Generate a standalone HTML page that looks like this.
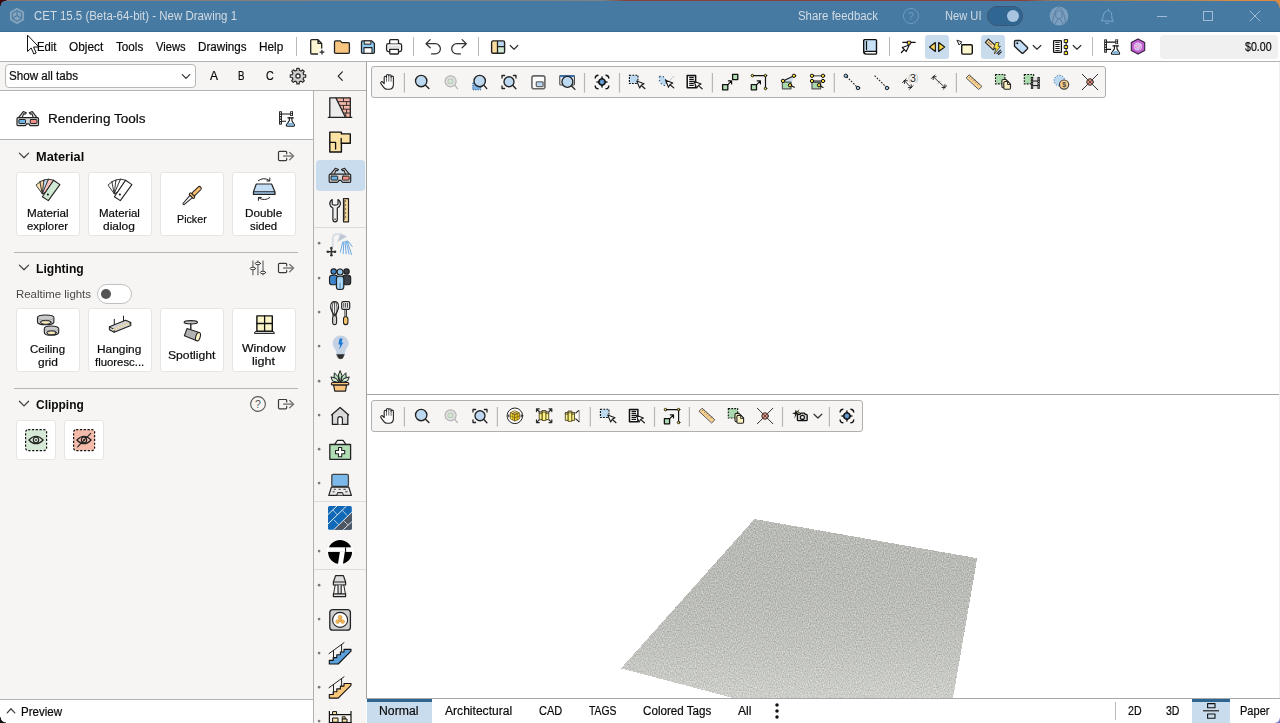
<!DOCTYPE html>
<html><head><meta charset="utf-8">
<style>
*{box-sizing:border-box;margin:0;padding:0}
html,body{width:1280px;height:723px;overflow:hidden;background:#fff;font-family:"Liberation Sans",sans-serif;color:#1a1a1a;font-size:12px}
div,svg{position:absolute}
.tx{white-space:nowrap;line-height:normal;transform-origin:0 0;-webkit-text-stroke:0.2px currentColor}
.ns{-webkit-text-stroke:0}
.ct{text-align:center;font-size:12px;color:#1a1a1a}
#title{left:0;top:0;width:1280px;height:32px;background:#467aa2;border-bottom:1px solid #396d9a}
#topedge{left:0;top:0;width:1280px;height:1px;background:linear-gradient(90deg,#300 0%,#400 0.3%,#8a7d76 0.6%,#7a848a 47%,#8a4038 49%,#8a4038 80%,#8a7868 82%,#b08858 93%,#d88a45 96%,#e08a40 100%)}
.hl{height:1px;background:#b2b2b2}
.vl{width:1px;background:#b2b2b2}
.sep{width:1px;background:#b9b9b9}
#tabsrow{left:0;top:62px;width:366px;height:28px;background:#f6f5f3}
#hdr{left:0;top:91px;width:313px;height:48px;background:#fff}
#left{left:0;top:140px;width:313px;height:559px;background:#f6f5f3}
#prev{left:0;top:700px;width:313px;height:23px;background:#fff}
#strip{left:314px;top:91px;width:52px;height:632px;background:#f6f5f3}
.card{width:64px;height:64px;background:#fff;border:1px solid #e6e5e3;border-radius:3px}
.scard{width:40px;height:40px;background:#fff;border:1px solid #e6e5e3;border-radius:3px}
.tb{background:#f6f5f3;border:1px solid #b0b0b0;border-radius:3px;height:32px}
.hi{background:#c9dcee;border-radius:3px}
.dot{width:2px;height:2px;background:#8a8a8a;border-radius:1px;left:319px}
</style></head><body>
<div id="title"></div>
<div id="topedge"></div>
<!-- menu bar -->
<div class="hl" style="left:0;top:61px;width:1280px"></div>
<div class="sep" style="left:296px;top:37px;height:19px"></div>
<div class="sep" style="left:413px;top:37px;height:19px"></div>
<div class="sep" style="left:478px;top:37px;height:19px"></div>
<div class="sep" style="left:889px;top:37px;height:19px"></div>
<div class="sep" style="left:1092px;top:37px;height:19px"></div>
<div class="hi" style="left:925px;top:35px;width:24px;height:24px"></div>
<div class="hi" style="left:981px;top:35px;width:24px;height:24px"></div>
<div style="left:1160px;top:35px;width:118px;height:24px;background:#f0f0f0;border-radius:4px"></div>
<!-- left panel -->
<div id="tabsrow"></div>
<div style="left:5px;top:64px;width:191px;height:24px;background:#fff;border:1px solid #b8b8b8;border-radius:4px"></div>
<div class="hl" style="left:0;top:90px;width:367px"></div>
<div id="hdr"></div>
<div class="hl" style="left:0;top:139px;width:313px"></div>
<div id="left"></div>
<div class="vl" style="left:313px;top:91px;height:632px"></div>
<div id="strip"></div>
<div class="vl" style="left:366px;top:62px;height:637px;background:#a2a2a2"></div>
<div class="hl" style="left:0;top:699px;width:313px"></div>
<div id="prev"></div>
<!-- cards -->
<div class="card" style="left:16px;top:172px"></div>
<div class="card" style="left:88px;top:172px"></div>
<div class="card" style="left:160px;top:172px"></div>
<div class="card" style="left:232px;top:172px"></div>
<div class="hl" style="left:14px;top:252px;width:284px;background:#b6b6b6"></div>
<div style="left:97px;top:284px;width:35px;height:20px;background:#fff;border:1px solid #c0c0c0;border-radius:10px"></div>
<div style="left:101px;top:289px;width:10px;height:10px;background:#555;border-radius:5px"></div>
<div class="card" style="left:16px;top:308px"></div>
<div class="card" style="left:88px;top:308px"></div>
<div class="card" style="left:160px;top:308px"></div>
<div class="card" style="left:232px;top:308px"></div>
<div class="hl" style="left:14px;top:388px;width:284px;background:#b6b6b6"></div>
<div class="scard" style="left:16px;top:420px"></div>
<div class="scard" style="left:64px;top:420px"></div>
<!-- strip -->
<div class="hi" style="left:315.5px;top:160.3px;width:49.3px;height:31.2px;border-radius:4px"></div>
<div class="hl" style="left:314px;top:227px;width:52px;background:#dcdcdc"></div>
<div class="hl" style="left:314px;top:501px;width:52px;background:#dcdcdc"></div>
<div class="hl" style="left:314px;top:569px;width:52px;background:#dcdcdc"></div>
<!-- main -->
<div class="tb" style="left:371px;top:66px;width:735px"></div>
<div class="hl" style="left:367px;top:394px;width:913px;background:#a4a4a4"></div>
<div class="tb" style="left:371px;top:400px;width:492px"></div>
<svg style="left:367px;top:395px" width="913" height="303" viewBox="367 395 913 303" shape-rendering="crispEdges">
<defs><filter id="nz" x="0" y="0" width="1" height="1" color-interpolation-filters="sRGB"><feTurbulence type="fractalNoise" baseFrequency="0.85 0.7" numOctaves="1" seed="7" result="t"/><feColorMatrix in="t" type="matrix" values="0.40 0 0 0 0.565  0.40 0 0 0 0.572  0.40 0 0 0 0.552  0 0 0 0 1" result="g"/><feComposite in="g" in2="SourceGraphic" operator="in"/></filter>
<linearGradient id="cg" x1="0" y1="519" x2="0" y2="698" gradientUnits="userSpaceOnUse"><stop offset="0" stop-color="#000" stop-opacity="0.05"/><stop offset="1" stop-color="#fff" stop-opacity="0.16"/></linearGradient></defs>
<polygon points="754.5,519 977.2,558.2 943.5,753.5 621,668.4" fill="#b9bab6" filter="url(#nz)"/>
<polygon points="754.5,519 977.2,558.2 943.5,753.5 621,668.4" fill="url(#cg)"/>
</svg>
<div class="hl" style="left:366px;top:698px;width:914px;background:#a8a8a8"></div>
<div style="left:367px;top:699px;width:65px;height:24px;background:#c9dcee"></div>
<div style="left:367px;top:699px;width:65px;height:3px;background:#2f6691"></div>
<div style="left:1192px;top:699px;width:38px;height:24px;background:#c9dcee"></div>
<div style="left:1192px;top:699px;width:38px;height:3px;background:#2f6691"></div>
<div class="sep" style="left:1115px;top:702px;height:18px"></div>
<div style="left:1275px;top:718px;width:5px;height:5px;background:radial-gradient(circle at 0 0,rgba(0,0,0,0) 4.2px,#8a8ad0 5px,#6a6ac0 6.5px)"></div>
<div class="vl" style="left:1279px;top:62px;height:636px;background:#efefef"></div>
<div style="left:1272px;top:0;width:8px;height:8px;background:radial-gradient(circle at 0 100%,rgba(0,0,0,0) 7px,#d88a45 7.8px)"></div>
<div style="left:0;top:0;width:6px;height:6px;background:radial-gradient(circle at 100% 100%,rgba(0,0,0,0) 5px,#3a0505 5.8px)"></div>
<div style="left:0;top:717px;width:6px;height:6px;background:radial-gradient(circle at 100% 0,rgba(0,0,0,0) 5px,#111 5.8px)"></div>
<svg style="left:0;top:0" width="1280" height="723" viewBox="0 0 1280 723" fill="none" stroke-linecap="round" stroke-linejoin="round">
<path d="M17,7.7 L24.1,11.8 V20 L17,24.2 L9.9,20 V11.8 Z" fill="#84a4be" stroke="none"/><g stroke="#4b7ca4" stroke-width="1.15"><path d="M17,10.6 L21.6,13.2 V18.6 L17,21.2 L12.4,18.6 V13.2 Z"/><path d="M17,10.9 V15.6 L12.8,18.3 M17,15.6 L21.2,18.3"/></g>
<circle cx="911" cy="16" r="7.6" stroke="#6c9bc3" stroke-width="1"/>
<text x="911" y="20" font-family="Liberation Sans, sans-serif" font-size="10.5" fill="#6c9bc3" text-anchor="middle" stroke="none">?</text>
<rect x="987.5" y="6.5" width="35" height="19" rx="9.5" fill="#2f6692" stroke="#3b4f66" stroke-width="1" stroke-dasharray="1 1.3"/>
<circle cx="1013" cy="16" r="6" fill="#a9c4de"/>
<circle cx="1059" cy="16" r="9.4" fill="#7a9fbf"/>
<g stroke="#5b7f9e" stroke-width="1"><path d="M1059,7.5 C1055,9 1054,14 1052,24 M1059,7.5 C1063,9 1064,14 1066,24 M1056,12 Q1059,9 1062,12 V17 Q1059,21 1056,17 Z M1055,24 L1058,19 M1063,24 L1060,19"/></g>
<g stroke="#79a9d2" stroke-width="1"><path d="M1101.5,20.5 C1103.5,19 1103,14 1105,12 C1107,10 1110.5,10.5 1111.5,13.5 C1112,16 1111.5,19 1113,21 Z"/><path d="M1105.5,22.5 a2,2 0 0 0 3.5,0.5 M1108.5,10 V9"/></g>
<g stroke="#9fbcd6" stroke-width="1" stroke-linecap="butt" shape-rendering="crispEdges"><path d="M1157,16.5 H1167"/><rect x="1203.5" y="11.5" width="9" height="9"/></g>
<g stroke="#9fbcd6" stroke-width="1"><path d="M1250,11 L1260,21 M1260,11 L1250,21"/></g>
<path d="M27.5,35.5 V51.5 L31.2,48 L33.8,54 L36.2,53 L33.6,47 H38.5 Z" fill="#fff" stroke="#111" stroke-width="1" stroke-linejoin="miter"/>
<path d="M311.8,39.7 H318 L321.7,43.4 V54 H311.8 Q310.7,54 310.7,53 V40.8 Q310.7,39.7 311.8,39.7 Z" fill="#fdf6d2" stroke="none"/>
<path d="M321.7,48 V43.4 L318,39.7 H311.8 Q310.7,39.7 310.7,40.8 V53 Q310.7,54 311.8,54 H317.6 M318,39.7 V43.4 H321.7" stroke="#222" stroke-width="1.3"/>
<rect x="318.6" y="49" width="6" height="6" fill="#fff" stroke="none"/><path d="M322,49.8 V54.6 M319.6,52.2 H324.4" stroke="#222" stroke-width="1.2" stroke-linecap="butt"/>
<path d="M335.6,40.9 H340.3 L342,42.6 H348.3 Q349.4,42.6 349.4,43.7 V52.2 Q349.4,53.3 348.3,53.3 H335.6 Q334.5,53.3 334.5,52.2 V42 Q334.5,40.9 335.6,40.9 Z" fill="#f9c681" stroke="#222" stroke-width="1.3"/>
<path d="M362.6,40.9 H371.8 L374.4,43.5 V52.2 Q374.4,53.3 373.3,53.3 H362.6 Q361.5,53.3 361.5,52.2 V42 Q361.5,40.9 362.6,40.9 Z" fill="#8fcaf2" stroke="#222" stroke-width="1.3"/>
<rect x="364.6" y="40.9" width="6.3" height="3.3" fill="#e8e8e8" stroke="#222" stroke-width="1"/>
<rect x="364" y="47.6" width="8" height="5.7" fill="#fff" stroke="#222" stroke-width="1.1"/>
<rect x="386.6" y="43.6" width="15" height="8" rx="1.8" fill="#fff" stroke="#222" stroke-width="1.3"/>
<rect x="387.6" y="45.6" width="13" height="3" fill="#e2e2e2" stroke="none"/>
<path d="M389.7,43.4 V40.6 Q389.7,39.7 390.6,39.7 H397.6 Q398.5,39.7 398.5,40.6 V43.4" fill="#fff" stroke="#222" stroke-width="1.3"/>
<path d="M389.7,49.3 H398.5 V53.1 Q398.5,54 397.6,54 H390.6 Q389.7,54 389.7,53.1 Z" fill="#fff" stroke="#222" stroke-width="1.3"/>
<path d="M430.2,39.6 L426,43.7 L430.2,47.8 M426,43.7 H435.3 a5.1,5.1 0 0 1 0,10.2 H431.6" stroke="#333" stroke-width="1.25"/>
<path d="M462.1,39.6 L466.3,43.7 L462.1,47.8 M466.3,43.7 H456.8 a5.1,5.1 0 0 0 0,10.2 H460.4" stroke="#333" stroke-width="1.25"/>
<rect x="491.6" y="40.9" width="6" height="12.4" fill="#f9dc9e" stroke="none"/><rect x="497.5" y="40.9" width="7" height="5.8" fill="#b9d7f1" stroke="none"/><rect x="497.5" y="46.6" width="7" height="6.7" fill="#d0e9d4" stroke="none"/>
<rect x="491.6" y="40.9" width="13" height="12.4" rx="1.6" stroke="#222" stroke-width="1.4"/><path d="M497.5,40.9 V53.3 M497.5,46.6 H504.6" stroke="#222" stroke-width="1.3" stroke-linecap="butt"/>
<path d="M510.2,45.5 L514,49.2 L517.8,45.5" stroke="#333" stroke-width="1.2"/>
<path d="M864.6,39.6 H875.6 Q876.5,39.6 876.5,40.5 V53.2 Q876.5,54.1 875.6,54.1 H866.2 Q863.7,54.1 863.7,51.6 V40.5 Q863.7,39.6 864.6,39.6 Z" fill="#fff" stroke="none"/>
<path d="M864.6,39.6 H875.6 Q876.5,39.6 876.5,40.5 V51.4 H866 Q863.7,51.4 863.7,52.5 V40.5 Q863.7,39.6 864.6,39.6 Z" fill="#c6e1f8" stroke="none"/>
<path d="M864.6,39.6 H875.6 Q876.5,39.6 876.5,40.5 V53.2 Q876.5,54.1 875.6,54.1 H866.2 Q863.7,54.1 863.7,51.6 V40.5 Q863.7,39.6 864.6,39.6 Z M876.5,51.4 H866 Q864.3,51.6 864,53" stroke="#111" stroke-width="1.4"/>
<path d="M866.5,41.6 V49.4" stroke="#111" stroke-width="1.2"/>
<path d="M902.8,42.4 H915.2" stroke="#111" stroke-width="1.1"/>
<rect x="907.7" y="41.2" width="3" height="3" fill="#ffee22" stroke="#221133" stroke-width="1"/>
<path d="M909.3,45 L902.3,47.5 L904.2,49.4 L906.2,51.6 Z" fill="#fff" stroke="#111" stroke-width="1.1"/><path d="M904.2,49.6 L901.4,52.5" stroke="#111" stroke-width="1.2"/>
<path d="M929.6,47 L935.3,42.6 V51.4 Z" fill="#f6dc2e" stroke="#1a1a1a" stroke-width="1.3"/><path d="M931,47 L934.5,44.5 V49.5 Z" fill="#fbd36a" stroke="none"/>
<path d="M944.6,47 L938.7,42.6 V51.4 Z" fill="#f6dc2e" stroke="#1a1a1a" stroke-width="1.3"/><path d="M943,47 L941,45.5 V48.5 Z" fill="#fbd36a" stroke="none"/>
<rect x="961.7" y="44.7" width="10.6" height="9.4" rx="1.3" fill="#fdf8cf" stroke="#111" stroke-width="1.4"/>
<path d="M957.3,40.3 L961.8,41.9 L959.4,44.7 Z" fill="#fff" stroke="#222" stroke-width="1"/><path d="M960.5,43.2 L962,44.8" stroke="#222" stroke-width="1"/>
<path d="M985.3,42.3 L988.4,39.2 L996.5,46.5 L993.3,49.8 Z" fill="#f9d9a0" stroke="#222" stroke-width="1.1"/><path d="M988.3,42 l1,1 M990.2,43.6 l1,1" stroke="#222" stroke-width="0.8"/>
<path d="M996,42.5 H999 L998,46.3 H1000.5 L994.3,54 L996,48.3 H994 Z" fill="#f5e23a" stroke="#333" stroke-width="0.8"/>
<path d="M997,53.5 L1000.5,50.2 M998.5,54.5 L1001.3,51.8" stroke="#222" stroke-width="1.1"/>
<path d="M1015.6,40.5 H1020.3 L1027.3,47.3 Q1028,48.1 1027.3,48.9 L1023.3,53 Q1022.5,53.7 1021.7,53 L1014.5,46.3 V41.6 Q1014.5,40.5 1015.6,40.5 Z" fill="#c3def6" stroke="#222" stroke-width="1.4"/><circle cx="1017.3" cy="43.3" r="1" fill="#111"/>
<path d="M1033.2,45.5 L1037,49.2 L1040.8,45.5" stroke="#333" stroke-width="1.2"/>
<rect x="1053.6" y="40.6" width="7.8" height="11.8" rx="0.6" fill="#fff" stroke="#111" stroke-width="1.3"/>
<path d="M1055.3,42.4 H1059.7 M1055.3,44.5 H1059.7 M1055.3,46.5 H1059.7 M1055.3,48.5 H1059.7 M1055.3,50.6 H1059.7" stroke="#111" stroke-width="1" stroke-linecap="butt"/>
<path d="M1066.1,41 V53" stroke="#111" stroke-width="1"/>
<rect x="1064.6" y="39.6" width="3" height="3" fill="#f6ee20" stroke="#1a1122" stroke-width="1"/>
<rect x="1064.6" y="45.5" width="3" height="3" fill="#f6ee20" stroke="#1a1122" stroke-width="1"/>
<rect x="1064.6" y="51.6" width="3" height="3" fill="#f6ee20" stroke="#1a1122" stroke-width="1"/>
<path d="M1073.2,45.5 L1077,49.2 L1080.8,45.5" stroke="#333" stroke-width="1.2"/>
<g transform="translate(1104.1,39.4)" stroke="none"><rect x="0.1" y="0" width="2.8" height="13.3" fill="#111"/><rect x="0.95" y="1" width="1.1" height="1.25" fill="#fff"/><rect x="0.95" y="3.5" width="1.1" height="1.25" fill="#fff"/><rect x="0.95" y="6" width="1.1" height="1.25" fill="#fff"/><rect x="0.95" y="8.5" width="1.1" height="1.25" fill="#fff"/><rect x="0.95" y="11" width="1.1" height="1.25" fill="#fff"/><rect x="11.2" y="0" width="2.8" height="4.7" fill="#111"/><rect x="12.05" y="0.8" width="1.1" height="1.2" fill="#fff"/><rect x="12.05" y="2.8" width="1.1" height="1.2" fill="#fff"/><path d="M2.8,2.7 H11.4 M2.8,10 H7" stroke="#111" stroke-width="1.1" stroke-linecap="butt"/><path d="M10.3,6.6 V9.5 L7.4,13.6 Q7,14.8 8.2,14.8 H14.6 Q15.8,14.8 15.4,13.6 L12.9,9.5 V6.6" fill="#fff" stroke="#111" stroke-width="1.1"/><path d="M8.4,12.3 Q11.5,10.8 14.6,12.3 L15,13.9 Q15,14.4 14.4,14.4 H8.4 Q7.8,14.4 7.9,13.8 Z" fill="#7fb2d9" stroke="none"/><path d="M8.9,6.5 H14.3" stroke="#111" stroke-width="1.2"/></g>
<path d="M1138,38.9 L1144.7,42.6 V50.4 L1138,54.1 L1131.3,50.4 V42.6 Z" fill="#c25fd0" stroke="#34203f" stroke-width="1.1"/>
<circle cx="1138" cy="46.5" r="4" fill="#e9c3ee"/>
<g fill="#7aa0e8"><rect x="1135.5" y="44" width="1" height="1"/><rect x="1138.6" y="43.5" width="1" height="1"/><rect x="1140.2" y="46.3" width="1" height="1"/><rect x="1136.4" y="48.3" width="1" height="1"/><rect x="1139" y="49" width="1" height="1"/></g><g fill="#e0489a"><rect x="1137.2" y="45.6" width="1.2" height="1"/><rect x="1139.5" y="47.6" width="1" height="1"/><rect x="1135.3" y="46.6" width="1" height="1"/></g>
<path d="M182.3,74.6 L186,78.3 L189.7,74.6" stroke="#333" stroke-width="1.2"/>
<path d="M296.62,70.36 L296.84,68.39 L299.16,68.39 L299.38,70.36 L301.08,71.07 L302.63,69.83 L304.27,71.47 L303.03,73.02 L303.74,74.72 L305.71,74.94 L305.71,77.26 L303.74,77.48 L303.03,79.18 L304.27,80.73 L302.63,82.37 L301.08,81.13 L299.38,81.84 L299.16,83.81 L296.84,83.81 L296.62,81.84 L294.92,81.13 L293.37,82.37 L291.73,80.73 L292.97,79.18 L292.26,77.48 L290.29,77.26 L290.29,74.94 L292.26,74.72 L292.97,73.02 L291.73,71.47 L293.37,69.83 L294.92,71.07 Z" fill="#d0d0d0" stroke="#2c2c2c" stroke-width="1.2"/>
<circle cx="298" cy="76.1" r="2.1" fill="#fff" stroke="#2c2c2c" stroke-width="1.3"/>
<path d="M342.3,71.8 L338.2,76.1 L342.3,80.4" stroke="#222" stroke-width="1.2"/>
<g transform="translate(16.7,111.2) scale(1)"><path d="M1.8,6.4 L6.6,0.4 L9.6,1.6 L8.4,3 L7,2.6 L5.4,6.4 M20.3,6.4 L15.6,0.4 L12.6,1.6 L13.8,3 L15.2,2.6 L16.6,6.4" fill="#e4e4e4" stroke="#222" stroke-width="1.1"/><path d="M1.4,6.4 H20.7 Q21.8,6.4 21.8,7.5 V13.4 Q21.8,14.5 20.7,14.5 H14 Q13.2,14.5 12.9,13.8 L12.3,12.6 H9.9 L9.3,13.8 Q9,14.5 8.2,14.5 H1.4 Q0.3,14.5 0.3,13.4 V7.5 Q0.3,6.4 1.4,6.4 Z" fill="#d9d9d9" stroke="#222" stroke-width="1.2"/><rect x="2.2" y="8.3" width="6.6" height="4" rx="0.6" fill="#6fb5ea" stroke="#222" stroke-width="1"/><rect x="13.6" y="8.3" width="6.6" height="4" rx="0.6" fill="#f28f86" stroke="#222" stroke-width="1"/></g>
<g transform="translate(279,111.3)" stroke="none"><rect x="0.1" y="0" width="2.8" height="13.3" fill="#111"/><rect x="0.95" y="1" width="1.1" height="1.25" fill="#fff"/><rect x="0.95" y="3.5" width="1.1" height="1.25" fill="#fff"/><rect x="0.95" y="6" width="1.1" height="1.25" fill="#fff"/><rect x="0.95" y="8.5" width="1.1" height="1.25" fill="#fff"/><rect x="0.95" y="11" width="1.1" height="1.25" fill="#fff"/><rect x="11.2" y="0" width="2.8" height="4.7" fill="#111"/><rect x="12.05" y="0.8" width="1.1" height="1.2" fill="#fff"/><rect x="12.05" y="2.8" width="1.1" height="1.2" fill="#fff"/><path d="M2.8,2.7 H11.4 M2.8,10 H7" stroke="#111" stroke-width="1.1" stroke-linecap="butt"/><path d="M10.3,6.6 V9.5 L7.4,13.6 Q7,14.8 8.2,14.8 H14.6 Q15.8,14.8 15.4,13.6 L12.9,9.5 V6.6" fill="#fff" stroke="#111" stroke-width="1.1"/><path d="M8.4,12.3 Q11.5,10.8 14.6,12.3 L15,13.9 Q15,14.4 14.4,14.4 H8.4 Q7.8,14.4 7.9,13.8 Z" fill="#7fb2d9" stroke="none"/><path d="M8.9,6.5 H14.3" stroke="#111" stroke-width="1.2"/></g>
<path d="M19.4,153.1 L24,157.70000000000002 L28.6,153.1" stroke="#444" stroke-width="1.3"/>
<path d="M19.4,265.09999999999997 L24,269.7 L28.6,265.09999999999997" stroke="#444" stroke-width="1.3"/>
<path d="M19.4,401.3 L24,405.90000000000003 L28.6,401.3" stroke="#444" stroke-width="1.3"/>
<g transform="translate(278.3,151.2)"><path d="M8.4,2.6 V1.3 Q8.4,0.2 7.3,0.2 H1.3 Q0.2,0.2 0.2,1.3 V8.4 Q0.2,9.5 1.3,9.5 H7.3 Q8.4,9.5 8.4,8.4 V7.1" stroke="#3a3a3a" stroke-width="1.2"/><path d="M4.8,4.85 H14.6" stroke="#8c8c8c" stroke-width="1.7" stroke-linecap="butt"/><path d="M11.4,1.2 L15.3,4.85 L11.4,8.5" stroke="#777" stroke-width="1.4"/></g>
<g transform="translate(278.3,263.2)"><path d="M8.4,2.6 V1.3 Q8.4,0.2 7.3,0.2 H1.3 Q0.2,0.2 0.2,1.3 V8.4 Q0.2,9.5 1.3,9.5 H7.3 Q8.4,9.5 8.4,8.4 V7.1" stroke="#3a3a3a" stroke-width="1.2"/><path d="M4.8,4.85 H14.6" stroke="#8c8c8c" stroke-width="1.7" stroke-linecap="butt"/><path d="M11.4,1.2 L15.3,4.85 L11.4,8.5" stroke="#777" stroke-width="1.4"/></g>
<g transform="translate(278.3,399.3)"><path d="M8.4,2.6 V1.3 Q8.4,0.2 7.3,0.2 H1.3 Q0.2,0.2 0.2,1.3 V8.4 Q0.2,9.5 1.3,9.5 H7.3 Q8.4,9.5 8.4,8.4 V7.1" stroke="#3a3a3a" stroke-width="1.2"/><path d="M4.8,4.85 H14.6" stroke="#8c8c8c" stroke-width="1.7" stroke-linecap="butt"/><path d="M11.4,1.2 L15.3,4.85 L11.4,8.5" stroke="#777" stroke-width="1.4"/></g>
<path d="M252.9,260.6 V275.2 M257.9,260.6 V275.2 M263,260.6 V275.2" stroke="#8e8e8e" stroke-width="1.6" stroke-linecap="butt"/>
<ellipse cx="252.9" cy="268.5" rx="2.7" ry="1.3" fill="#fafafa" stroke="#3c3c3c" stroke-width="1"/>
<ellipse cx="257.9" cy="263.4" rx="2.7" ry="1.3" fill="#fafafa" stroke="#3c3c3c" stroke-width="1"/>
<ellipse cx="263" cy="272.5" rx="2.7" ry="1.3" fill="#fafafa" stroke="#3c3c3c" stroke-width="1"/>
<circle cx="258" cy="404" r="7.4" stroke="#555" stroke-width="1.1"/>
<text x="258" y="408" font-family="Liberation Sans, sans-serif" font-size="10.5" fill="#555" text-anchor="middle" stroke="none">?</text>
<path d="M36.3,184.8 L40.2,181.6 L45.1,192.6 L42.6,193.6 Z" fill="#fbe6b4" stroke="#222" stroke-width="0.9"/>
<path d="M40.2,181.6 L44.3,179.9 L45.1,192.6 L42.6,193.6 Z" fill="#f9d5a4" stroke="#222" stroke-width="0.9"/>
<path d="M44.3,179.9 L48.8,179.2 L45.1,192.6 L42.6,193.6 Z" fill="#bcd8f2" stroke="#222" stroke-width="0.9"/>
<path d="M48.8,179.2 L53.6,180.2 L45.1,192.6 L42.6,193.6 Z" fill="#f8c3bd" stroke="#222" stroke-width="0.9"/>
<path d="M53.6,180.2 L59.9,184.6 L48.3,200.6 L42.4,196.8 Z" fill="#d0e9d4" stroke="#222" stroke-width="1.1"/>
<circle cx="47.9" cy="194.5" r="1.05" fill="#111"/>
<path d="M108.3,184.8 L112.2,181.6 L117.1,192.6 L114.6,193.6 Z" fill="#fff" stroke="#222" stroke-width="0.9"/>
<path d="M112.2,181.6 L116.3,179.9 L117.1,192.6 L114.6,193.6 Z" fill="#fff" stroke="#222" stroke-width="0.9"/>
<path d="M116.3,179.9 L120.8,179.2 L117.1,192.6 L114.6,193.6 Z" fill="#fff" stroke="#222" stroke-width="0.9"/>
<path d="M120.8,179.2 L125.6,180.2 L117.1,192.6 L114.6,193.6 Z" fill="#fff" stroke="#222" stroke-width="0.9"/>
<path d="M125.6,180.2 L131.9,184.6 L120.3,200.6 L114.4,196.8 Z" fill="#fff" stroke="#222" stroke-width="1.1"/>
<circle cx="119.9" cy="194.5" r="1.05" fill="#111"/>
<g transform="translate(183.1,204.5) rotate(-44.7)"><path d="M0.6,-0.8 L11.6,-1.7 V1.7 L0.6,0.8 Q-0.4,0 0.6,-0.8 Z" fill="#f2f2f2" stroke="#222" stroke-width="1"/><rect x="13.4" y="-1.9" width="11.4" height="3.8" rx="1.9" fill="#f5bd6d" stroke="#222" stroke-width="1"/><rect x="11.4" y="-3.2" width="2.4" height="6.4" rx="0.9" fill="#f5bd6d" stroke="#222" stroke-width="1"/></g>
<path d="M256.3,184 H271.6 L274.8,191.6 V194.4 H253.5 V191.6 Z" fill="#c4def6" stroke="#222" stroke-width="1.2"/><path d="M253.5,191.8 H274.8 V194.4 H253.5 Z" fill="#a9cdf0" stroke="#222" stroke-width="1.1"/>
<path d="M258.3,180.7 Q263.5,176.5 269.6,180.6 M269.8,178 V181 H266.9" stroke="#222" stroke-width="1"/>
<path d="M269.8,197.6 Q264.5,201.6 258.6,197.8 M258.4,200.4 V197.4 H261.3" stroke="#222" stroke-width="1"/>
<path d="M37.5,317.6 A8.2,2.6 0 0 1 53.900000000000006,317.6 V322.0 A8.2,2.8 0 0 1 37.5,322.0 Z" fill="#c9c9c9" stroke="#222" stroke-width="1.1"/>
<path d="M38.1,318.20000000000005 A7.6,2.2 0 0 0 53.300000000000004,318.20000000000005" stroke="#9a9a9a" stroke-width="0.7"/>
<ellipse cx="45.7" cy="322.2" rx="5.412" ry="1.9" fill="#8a8a8a" stroke="#222" stroke-width="0.9"/>
<ellipse cx="45.7" cy="322.5" rx="4.1" ry="1.15" fill="#fbe9b5" stroke="none"/>
<path d="M44.3,328.6 A7.2,2.6 0 0 1 58.7,328.6 V332.40000000000003 A7.2,2.8 0 0 1 44.3,332.40000000000003 Z" fill="#c9c9c9" stroke="#222" stroke-width="1.1"/>
<path d="M44.9,329.20000000000005 A6.6000000000000005,2.2 0 0 0 58.1,329.20000000000005" stroke="#9a9a9a" stroke-width="0.7"/>
<ellipse cx="51.5" cy="332.6" rx="4.752000000000001" ry="1.9" fill="#8a8a8a" stroke="#222" stroke-width="0.9"/>
<ellipse cx="51.5" cy="332.90000000000003" rx="3.6" ry="1.15" fill="#fbe9b5" stroke="none"/>
<path d="M114.3,319.3 V325 M123.5,316.1 V321.5" stroke="#222" stroke-width="1"/>
<path d="M109.4,326.7 L125.6,320.2 L130.8,322.4 V325.4 L114.2,332.3 L109.4,329.7 Z" fill="#d2d2d2" stroke="#222" stroke-width="1.1"/>
<path d="M109.6,327 L114.2,329.4 L130.6,322.8 M114.2,329.4 V332" stroke="#222" stroke-width="0.9"/>
<path d="M113.5,329.6 L128.5,323.6" stroke="#fbe9b5" stroke-width="1.4"/>
<ellipse cx="190.8" cy="322.3" rx="6.7" ry="1.7" fill="#c4c4c4" stroke="#222" stroke-width="1.1"/><path d="M190.8,324 V329.5" stroke="#222" stroke-width="1.4"/>
<path d="M187,328.6 L199.2,332.6 L196.8,340.8 L184.4,335.8 Z" fill="#b2b2b2" stroke="#222" stroke-width="1.1"/>
<ellipse cx="198" cy="336.7" rx="2.2" ry="4.3" transform="rotate(17 198 336.7)" fill="#fdf3c5" stroke="#222" stroke-width="1.1"/>
<rect x="256.9" y="315.9" width="15.4" height="15.4" fill="#fbf5c8" stroke="#111" stroke-width="1.4"/><path d="M264.6,315.9 V331.3 M256.9,323.5 H272.3" stroke="#111" stroke-width="1.3"/>
<path d="M255.6,331.6 H273.6 L274.4,333.4 H254.8 Z" fill="#fff" stroke="#111" stroke-width="1"/>
<rect x="25.6" y="429.6" width="21" height="21" rx="2.5" fill="#d6e9d6" stroke="#111" stroke-width="1.2" stroke-dasharray="2.2 1.6" stroke-linecap="butt"/>
<path d="M28.8,440 Q36,432.4 43.2,440 Q36,447.6 28.8,440 Z" stroke="#222" stroke-width="1.1"/>
<circle cx="36" cy="440" r="2.7" stroke="#222" stroke-width="1.1"/><circle cx="36" cy="440" r="1.1" fill="#444"/>
<rect x="73.6" y="429.6" width="21" height="21" rx="2.5" fill="#f4bbab" stroke="#111" stroke-width="1.2" stroke-dasharray="2.2 1.6" stroke-linecap="butt"/>
<path d="M76.8,440 Q84,432.4 91.2,440 Q84,447.6 76.8,440 Z" stroke="#222" stroke-width="1.1"/>
<circle cx="84" cy="440" r="2.7" stroke="#222" stroke-width="1.1"/><circle cx="84" cy="440" r="1.1" fill="#444"/>
<path d="M77.6,446.8 L90.7,433.4" stroke="#222" stroke-width="1.1"/>
<path d="M7.2,712.9 L11,708.8 L14.8,712.9" stroke="#444" stroke-width="1.3"/>
<circle cx="319.1" cy="243.2" r="1.35" fill="#7a7a7a"/>
<circle cx="319.1" cy="278.1" r="1.35" fill="#7a7a7a"/>
<circle cx="319.1" cy="312.1" r="1.35" fill="#7a7a7a"/>
<circle cx="319.1" cy="346.1" r="1.35" fill="#7a7a7a"/>
<circle cx="319.1" cy="381.2" r="1.35" fill="#7a7a7a"/>
<circle cx="319.1" cy="415.1" r="1.35" fill="#7a7a7a"/>
<circle cx="319.1" cy="449.2" r="1.35" fill="#7a7a7a"/>
<circle cx="319.1" cy="483.1" r="1.35" fill="#7a7a7a"/>
<circle cx="319.1" cy="551.1" r="1.35" fill="#7a7a7a"/>
<circle cx="319.1" cy="585.2" r="1.35" fill="#7a7a7a"/>
<circle cx="319.1" cy="619.1" r="1.35" fill="#7a7a7a"/>
<circle cx="319.1" cy="653.1" r="1.35" fill="#7a7a7a"/>
<circle cx="319.1" cy="687.2" r="1.35" fill="#7a7a7a"/>
<circle cx="319.1" cy="721.1" r="1.35" fill="#7a7a7a"/>
<path d="M329.8,97.8 H350.3 V117 H329.8 Z" fill="#f4b5a7" stroke="none"/>
<path d="M329.8,97.8 H335.8 L345.3,117 H329.8 Z" fill="#ececec" stroke="none"/>
<g stroke="#222" stroke-width="0.9" stroke-linecap="butt"><path d="M337.6,101.6 H350.3 M339.5,105.4 H350.3 M341.4,109.2 H350.3 M343.3,113 H350.3 M343.5,97.8 V101.6 M346.6,101.6 V105.4 M343.5,105.4 V109.2 M346.6,109.2 V113 M345.8,113 V117"/></g>
<path d="M329.8,117 V97.8 H350.3 V117 M335.8,97.8 L345.3,117" stroke="#222" stroke-width="1.3"/><path d="M328.3,117.3 H351.8" stroke="#222" stroke-width="1.3"/>
<path d="M329.8,132.1 H341.4 V133.9 H350.3 V143.3 H341.4 V152 H329.8 Z" fill="#fbe1a3" stroke="#111" stroke-width="1.4"/>
<path d="M329.8,142.4 H335.6 V149 M341.2,138.4 V143.3" stroke="#111" stroke-width="1.3"/>
<g transform="translate(328.9,167.8) scale(1)"><path d="M1.8,6.4 L6.6,0.4 L9.6,1.6 L8.4,3 L7,2.6 L5.4,6.4 M20.3,6.4 L15.6,0.4 L12.6,1.6 L13.8,3 L15.2,2.6 L16.6,6.4" fill="#e4e4e4" stroke="#222" stroke-width="1.1"/><path d="M1.4,6.4 H20.7 Q21.8,6.4 21.8,7.5 V13.4 Q21.8,14.5 20.7,14.5 H14 Q13.2,14.5 12.9,13.8 L12.3,12.6 H9.9 L9.3,13.8 Q9,14.5 8.2,14.5 H1.4 Q0.3,14.5 0.3,13.4 V7.5 Q0.3,6.4 1.4,6.4 Z" fill="#d9d9d9" stroke="#222" stroke-width="1.2"/><rect x="2.2" y="8.3" width="6.6" height="4" rx="0.6" fill="#6fb5ea" stroke="#222" stroke-width="1"/><rect x="13.6" y="8.3" width="6.6" height="4" rx="0.6" fill="#f28f86" stroke="#222" stroke-width="1"/></g>
<path d="M332.2,199.6 Q329.6,201.2 329.8,204.2 Q330.2,207 332.9,208 V219.6 Q333,221.8 335.1,221.8 Q337.2,221.8 337.3,219.6 V208 Q340,207 340.4,204.2 Q340.6,201.2 338,199.6 V204 Q337.8,205.2 335.1,205.2 Q332.4,205.2 332.2,204 Z" fill="#eee" stroke="#222" stroke-width="1.2"/><circle cx="335.1" cy="219.2" r="0.8" fill="#222"/>
<rect x="343.5" y="198.6" width="5" height="23.2" fill="#f9dc9e" stroke="#222" stroke-width="1.2"/>
<path d="M343.5,201 h2.6 M343.5,203 h1.6 M343.5,205 h2.6 M343.5,207 h1.6 M343.5,209 h2.6 M343.5,211 h1.6 M343.5,213 h2.6 M343.5,215 h1.6 M343.5,217 h2.6 M343.5,219 h1.6" stroke="#222" stroke-width="1" stroke-linecap="butt"/>
<path d="M332.8,247 V238.5 Q332.8,234.3 337,234.3 H340.5" stroke="#cbd5e2" stroke-width="1.9" stroke-dasharray="1.2 0.5" stroke-linecap="butt"/>
<path d="M340.8,233.8 L346.6,236.6 L338,241.4 Z" fill="#c0c6cf" stroke="#cbd5e2" stroke-width="0.8"/>
<g stroke="#3b8fde" stroke-width="0.75"><path d="M342.6,242.2 L340.4,252.2 M343.8,241.8 L343.2,253.6 M345,241.4 L346.2,253.8 M346.2,241.2 L349,254 M347.2,241 L351.6,254.6 M348,241.2 L352.2,246.4"/></g>
<path d="M331.4,248.2 V255.2 M327.9,251.7 H334.9" stroke="#333" stroke-width="1.6"/><g fill="#333"><circle cx="331.4" cy="248.1" r="1.3"/><circle cx="331.4" cy="255.3" r="1.3"/><circle cx="327.8" cy="251.7" r="1.3"/><circle cx="335" cy="251.7" r="1.3"/></g>
<rect x="329.5" y="275.2" width="8.4" height="9.600000000000023" rx="2.5" fill="#3b84c8" stroke="#1c1c1c" stroke-width="1.1"/>
<circle cx="333.7" cy="271.6" r="2.7" fill="#3b84c8" stroke="#1c1c1c" stroke-width="1.1"/>
<rect x="342.3" y="275.2" width="8.4" height="9.600000000000023" rx="2.5" fill="#3b4048" stroke="#1c1c1c" stroke-width="1.1"/>
<circle cx="346.5" cy="271.6" r="2.7" fill="#3b4048" stroke="#1c1c1c" stroke-width="1.1"/>
<rect x="336.40000000000003" y="276.2" width="7.4" height="13.300000000000011" rx="2.5" fill="#92c6ec" stroke="#1c1c1c" stroke-width="1.1"/>
<circle cx="340.1" cy="272" r="3" fill="#92c6ec" stroke="#1c1c1c" stroke-width="1.1"/>
<path d="M338.9,279 V288 M341.3,279 V288" stroke="#d4ecfb" stroke-width="0.8"/><path d="M340.1,283.5 V288.8" stroke="#3a6f9a" stroke-width="0.7"/>
<path d="M334.6,316 Q328,306 332,302.3 Q334.6,300.6 337.2,302.3 Q341.2,306 334.6,316 Z" fill="#f2f2f2" stroke="#222" stroke-width="1.1"/><path d="M334.6,301.6 V316 M333,316 Q331,306 333.4,302 M336.2,316 Q338.2,306 335.8,302" stroke="#222" stroke-width="0.8"/>
<rect x="332.6" y="315.8" width="4" height="8.8" rx="1.9" fill="#d2d2d2" stroke="#222" stroke-width="1.1"/>
<rect x="341.7" y="301.7" width="8" height="7.6" rx="1.6" fill="#fff" stroke="#222" stroke-width="1.2"/><path d="M343.8,303.4 V307.4 M345.7,303.4 V307.4 M347.6,303.4 V307.4" stroke="#222" stroke-width="0.9"/>
<path d="M344.9,309.3 V317 M346.5,309.3 V317" stroke="#222" stroke-width="0.9"/><rect x="343.5" y="316.8" width="4.4" height="7.8" rx="2" fill="#f9c56a" stroke="#222" stroke-width="1.1"/>
<path d="M340.6,336 A7.4,7.4 0 0 1 346.2,348.4 Q344.3,351 344.2,354.4 H337 Q336.9,351 335,348.4 A7.4,7.4 0 0 1 340.6,336 Z" fill="#c6d1e2" stroke="#b9d0ea" stroke-width="0.8" stroke-dasharray="1 0.8"/>
<path d="M336.9,354.6 H344.3 L342.6,358.2 Q340.6,359.4 338.6,358.2 Z" fill="#2e2e2e" stroke="#2e2e2e" stroke-width="0.6"/>
<path d="M339.6,338.6 H342.6 L341.4,342.6 H343.3 L339.3,349.6 L340.2,344.6 H338.4 Z" fill="#1878d6" stroke="none"/>
<g fill="#b4e0bc" stroke="#222" stroke-width="1"><path d="M340.1,382.4 L338.4,375 L340.1,370.6 L341.8,375 Z"/><path d="M339,382.4 L334,377.6 L334.4,372.8 L338,376.6 Z"/><path d="M341.2,382.4 L346.2,377.6 L345.8,372.8 L342.2,376.6 Z"/><path d="M338.6,382.5 L332.6,381 L330.9,376.9 L336,378.4 Z" fill="#d3efd8"/><path d="M341.6,382.5 L347.6,381 L349.3,376.9 L344.2,378.4 Z" fill="#d3efd8"/></g>
<path d="M333.6,384.8 H346.6 L345.5,391.2 H334.8 Z" fill="#f9c57c" stroke="#222" stroke-width="1.2"/><rect x="331.4" y="382.5" width="17.4" height="2.4" rx="1" fill="#f9c57c" stroke="#222" stroke-width="1.1"/>
<path d="M332.4,415.2 V424.4 H347.8 V415.2" fill="#d9d9d9" stroke="none"/><path d="M331.6,415 L340.1,407.6 L348.6,415 Z" fill="#d9d9d9" stroke="none"/>
<path d="M331.5,414.9 L340.1,407.5 L348.7,414.9 M332.4,414.4 V424.4 H347.8 V414.4" stroke="#222" stroke-width="1.3"/>
<path d="M337.8,424.4 V419 Q337.8,416.7 340.1,416.7 Q342.4,416.7 342.4,419 V424.4" fill="#fff" stroke="#222" stroke-width="1.2"/>
<path d="M334.6,444.4 L337.5,440.3 H343.1 L345.8,444.4" fill="#fff" stroke="#222" stroke-width="1.2"/>
<rect x="329.8" y="444.5" width="20.8" height="14.8" fill="#b1ddb4" stroke="#222" stroke-width="1.3"/>
<path d="M338.5,447.5 H341.7 V450.5 H344.7 V453.7 H341.7 V456.7 H338.5 V453.7 H335.5 V450.5 H338.5 Z" fill="#fff" stroke="#222" stroke-width="1.1"/>
<rect x="331.8" y="474.3" width="16.6" height="12" rx="1.4" fill="#7cb8e8" stroke="#444" stroke-width="1.3"/>
<path d="M331.4,487.2 H348.8 L351.4,495.4 H328.8 Z" fill="#e9e9e9" stroke="#222" stroke-width="1.2"/>
<path d="M333.8,489.3 h2 M338.6,489.3 h2 M343.4,489.3 h2.4 M332.6,491.8 h2 M345.2,491.8 h2.4" stroke="#333" stroke-width="1" stroke-linecap="butt"/><path d="M336.8,495.2 L337.6,492.6 H342.6 L343.4,495.2" fill="#ccc" stroke="#222" stroke-width="1"/>
<defs><clipPath id="tl"><rect x="328" y="506" width="23.8" height="23.8" rx="1.6"/></clipPath></defs>
<g clip-path="url(#tl)"><rect x="328" y="506" width="24" height="24" fill="#1068b6"/><path d="M352,512 V530 H334 Z" fill="#4e5661"/><g stroke="#fff" stroke-width="0.9" stroke-linecap="butt"><path d="M328,514.5 L337,506 M328,524 L346.5,506 M333.5,530 L352,512 M343,530 L352,521.5"/><path d="M333,510 L337.5,515 M338.5,524.6 L334,520 M342.5,510.5 L347,515.5 M343.5,520.5 L348,525" stroke-width="0.8" stroke="#cfe1f0"/></g></g>
<circle cx="340.05" cy="551.9" r="12.9" fill="#fff"/><circle cx="340.05" cy="551.9" r="12" fill="#000"/>
<rect x="327" y="547.3" width="26" height="4.6" fill="#fff" stroke="none"/><rect x="345.1" y="547.3" width="1" height="4.6" fill="#000" stroke="none"/>
<path d="M339.9,551.8 H344.8 L342.8,564.4 H337.9 Z" fill="#fff" stroke="none"/>
<path d="M335.6,575.6 H343.4 L345.6,582 V585 H333.4 V582 Z" fill="#dedede" stroke="#222" stroke-width="1.2"/><path d="M333.4,582 H345.6" stroke="#222" stroke-width="1.1"/>
<path d="M335.2,585 L333.6,593.8 M343.8,585 L345.4,593.8" stroke="#222" stroke-width="1"/><path d="M338,585 V593.8 H341.2 V585" fill="#dedede" stroke="#222" stroke-width="1.1"/>
<rect x="333.4" y="593.8" width="12.2" height="2.8" fill="#dedede" stroke="#222" stroke-width="1.2"/>
<rect x="329.8" y="609.6" width="20.6" height="20.6" rx="3" fill="#cfcfcf" stroke="#222" stroke-width="1.3"/><circle cx="340.1" cy="619.9" r="7.5" fill="#fff" stroke="#222" stroke-width="1.1"/>
<g fill="#f5b95c" stroke="#c98b2a" stroke-width="0.5"><circle cx="340.1" cy="617.2" r="1.9"/><circle cx="337.6" cy="621.6" r="1.9"/><circle cx="342.6" cy="621.6" r="1.9"/><circle cx="340.1" cy="620" r="1.3"/></g>
<g transform="translate(0,0)"><path d="M329.3,664 V660.4 H333.2 V657.6 H336.8 V654.8 H340.4 V652 H344 V649.4 H351 V651.2 L338.2,664 Z" fill="#5aa0da" stroke="#111" stroke-width="1.1"/><path d="M329,653.6 L344,642.7 M333.5,650.4 V660 M341.6,644.6 V651.8" stroke="#222" stroke-width="1"/></g>
<g transform="translate(0,34.1)"><path d="M329.3,664 V660.4 H333.2 V657.6 H336.8 V654.8 H340.4 V652 H344 V649.4 H351 V651.2 L338.2,664 Z" fill="#f9c67a" stroke="#111" stroke-width="1.1"/><path d="M329,653.6 L344,642.7 M333.5,650.4 V660 M341.6,644.6 V651.8" stroke="#222" stroke-width="1"/></g>
<path d="M329.4,711 V723 M351,711 V723 M329.4,714.7 H351" stroke="#111" stroke-width="1.2" stroke-linecap="butt"/>
<rect x="333" y="711.6" width="3.6" height="3" fill="#fbe6a8" stroke="#111" stroke-width="1"/><rect x="333" y="718" width="5" height="4.2" fill="#fbe6a8" stroke="#111" stroke-width="1"/><rect x="342.6" y="716.8" width="2.6" height="2.2" fill="#fbe6a8" stroke="#111" stroke-width="0.9"/><rect x="342.6" y="719" width="4.4" height="3.2" fill="#fbe6a8" stroke="#111" stroke-width="1"/>
<path d="M329.4,722.6 H351" stroke="#111" stroke-width="1.2"/>
<path d="M404.4,73 V92.6" stroke="#b6b6b6" stroke-width="1.2" stroke-linecap="butt"/>
<path d="M584.5,73 V92.6" stroke="#b6b6b6" stroke-width="1.2" stroke-linecap="butt"/>
<path d="M619.5,73 V92.6" stroke="#b6b6b6" stroke-width="1.2" stroke-linecap="butt"/>
<path d="M712.4,73 V92.6" stroke="#b6b6b6" stroke-width="1.2" stroke-linecap="butt"/>
<path d="M834.3,73 V92.6" stroke="#b6b6b6" stroke-width="1.2" stroke-linecap="butt"/>
<path d="M956.4,73 V92.6" stroke="#b6b6b6" stroke-width="1.2" stroke-linecap="butt"/>
<path d="M404.4,407 V426.6" stroke="#b6b6b6" stroke-width="1.2" stroke-linecap="butt"/>
<path d="M497.4,407 V426.6" stroke="#b6b6b6" stroke-width="1.2" stroke-linecap="butt"/>
<path d="M590.3,407 V426.6" stroke="#b6b6b6" stroke-width="1.2" stroke-linecap="butt"/>
<path d="M654.5,407 V426.6" stroke="#b6b6b6" stroke-width="1.2" stroke-linecap="butt"/>
<path d="M689.4,407 V426.6" stroke="#b6b6b6" stroke-width="1.2" stroke-linecap="butt"/>
<path d="M782.5,407 V426.6" stroke="#b6b6b6" stroke-width="1.2" stroke-linecap="butt"/>
<path d="M829.4,407 V426.6" stroke="#b6b6b6" stroke-width="1.2" stroke-linecap="butt"/>
<g transform="translate(0,0)"><path d="M384.2,83.6 V77.4 Q384.2,76.2 385.35,76.2 Q386.5,76.2 386.5,77.4 V75.6 Q386.5,74.5 387.65,74.5 Q388.8,74.5 388.8,75.6 V75.8 Q388.8,74.8 389.95,74.8 Q391.1,74.8 391.1,75.9 V77.2 Q391.1,76.1 392.25,76.1 Q393.4,76.1 393.4,77.3 V84.6 Q393.4,89.3 389,89.3 H387.2 Q385.2,89.3 383.9,87.6 L380.9,83.7 Q380.2,82.6 381.2,81.9 Q382.2,81.3 383,82.3 Z" fill="#fff" stroke="#222" stroke-width="1.1"/><path d="M386.5,77.6 V81.4 M388.8,76 V81.2 M391.1,77.2 V81.4" stroke="#444" stroke-width="0.8"/></g>
<g transform="translate(0,334)"><path d="M384.2,83.6 V77.4 Q384.2,76.2 385.35,76.2 Q386.5,76.2 386.5,77.4 V75.6 Q386.5,74.5 387.65,74.5 Q388.8,74.5 388.8,75.6 V75.8 Q388.8,74.8 389.95,74.8 Q391.1,74.8 391.1,75.9 V77.2 Q391.1,76.1 392.25,76.1 Q393.4,76.1 393.4,77.3 V84.6 Q393.4,89.3 389,89.3 H387.2 Q385.2,89.3 383.9,87.6 L380.9,83.7 Q380.2,82.6 381.2,81.9 Q382.2,81.3 383,82.3 Z" fill="#fff" stroke="#222" stroke-width="1.1"/><path d="M386.5,77.6 V81.4 M388.8,76 V81.2 M391.1,77.2 V81.4" stroke="#444" stroke-width="0.8"/></g>
<g transform="translate(0,0)"><path d="M425.53047,85.33046999999999 L428.9,88.6" stroke="#222" stroke-width="1.35"/><circle cx="421.2" cy="81" r="5.7" fill="#bdd9f1" stroke="#222" stroke-width="1.35"/></g>
<g transform="translate(0,0)"><path d="M454.78905000000003,85.48904999999999 L457.6,88.6" stroke="#b4b4b4" stroke-width="1.2"/><circle cx="450.6" cy="81.3" r="5.5" fill="#e2e2e2" stroke="#b4b4b4" stroke-width="1.2"/><rect x="448.5" y="79.2" width="4.2" height="4.2" fill="#cfe7cf" stroke="#b9c4b9" stroke-width="0.9"/></g>
<g transform="translate(0,334)"><path d="M425.53047,85.33046999999999 L428.9,88.6" stroke="#222" stroke-width="1.35"/><circle cx="421.2" cy="81" r="5.7" fill="#bdd9f1" stroke="#222" stroke-width="1.35"/></g>
<g transform="translate(0,334)"><path d="M454.78905000000003,85.48904999999999 L457.6,88.6" stroke="#b4b4b4" stroke-width="1.2"/><circle cx="450.6" cy="81.3" r="5.5" fill="#e2e2e2" stroke="#b4b4b4" stroke-width="1.2"/><rect x="448.5" y="79.2" width="4.2" height="4.2" fill="#cfe7cf" stroke="#b9c4b9" stroke-width="0.9"/></g>
<rect x="472.8" y="83" width="8" height="6.8" fill="#7db3e2" stroke="#1f4f86" stroke-width="0.9" stroke-dasharray="1.2 1.2" stroke-linecap="butt"/>
<path d="M484.03047,85.33046999999999 L486.8,88.6" stroke="#222" stroke-width="1.35"/><circle cx="479.7" cy="81" r="5.7" fill="#bdd9f1" stroke="#222" stroke-width="1.35"/>
<g stroke="#222" stroke-width="1.3"><path d="M502,78.10000000000001 V75.5 H504.6 M513.4,75.5 H516 V78.10000000000001 M502,85.9 V88.5 H504.6"/></g><path d="M512.8354999999999,85.5355 L515.9,88.7" stroke="#222" stroke-width="1.35"/><circle cx="509" cy="81.7" r="5" fill="#bdd9f1" stroke="#222" stroke-width="1.35"/>
<g stroke="#222" stroke-width="1.3"><path d="M473,412.09999999999997 V409.5 H475.6 M484.4,409.5 H487 V412.09999999999997 M473,419.9 V422.5 H475.6"/></g><path d="M483.8355,419.5355 L486.9,422.7" stroke="#222" stroke-width="1.35"/><circle cx="480" cy="415.7" r="5" fill="#bdd9f1" stroke="#222" stroke-width="1.35"/>
<rect x="531.9" y="75.9" width="13" height="12.8" rx="2" fill="#fbfbfb" stroke="#666" stroke-width="1.6"/><rect x="536.3" y="81.8" width="6.8" height="4.8" rx="0.8" fill="#b7d6f1" stroke="#666" stroke-width="1.3"/>
<rect x="559.8" y="75.6" width="14.6" height="9.4" rx="0.8" fill="#fff" stroke="#444" stroke-width="1.1"/><rect x="559.8" y="75.3" width="14.6" height="1.9" fill="#3a7abc" stroke="none"/>
<path d="M571.5890499999999,85.98904999999999 L574.9,89.4" stroke="#222" stroke-width="1.35"/><circle cx="567.4" cy="81.8" r="5.5" fill="#bdd9f1" stroke="#222" stroke-width="1.35"/>
<path d="M595.2,78.5 Q595.2,75.2 598.5,75.2 M605.5,75.2 Q608.8,75.2 608.8,78.5 M608.8,85.5 Q608.8,88.8 605.5,88.8 M598.5,88.8 Q595.2,88.8 595.2,85.5" stroke="#111" stroke-width="1.4" stroke-linecap="butt"/><path d="M596.6,82 L599.2,80.5 V83.5 Z M607.4,82 L604.8,80.5 V83.5 Z M602,76.6 L600.5,79.2 H603.5 Z M602,87.4 L600.5,84.8 H603.5 Z" fill="#1a1a1a" stroke="none"/><path d="M596.4,82 H607.6 M602,76.4 V87.6" stroke="#222" stroke-width="0.8"/><circle cx="602" cy="82" r="3.1" fill="#4f84b8" stroke="#111" stroke-width="1.4"/><path d="M600.2,82 H603.8 M602,80.2 V83.8" stroke="#7fb4e4" stroke-width="0.7"/>
<path d="M840.1,412.5 Q840.1,409.2 843.4,409.2 M850.4,409.2 Q853.6999999999999,409.2 853.6999999999999,412.5 M853.6999999999999,419.5 Q853.6999999999999,422.8 850.4,422.8 M843.4,422.8 Q840.1,422.8 840.1,419.5" stroke="#111" stroke-width="1.4" stroke-linecap="butt"/><path d="M841.5,416 L844.1,414.5 V417.5 Z M852.3,416 L849.6999999999999,414.5 V417.5 Z M846.9,410.6 L845.4,413.2 H848.4 Z M846.9,421.4 L845.4,418.8 H848.4 Z" fill="#1a1a1a" stroke="none"/><path d="M841.3,416 H852.5 M846.9,410.4 V421.6" stroke="#222" stroke-width="0.8"/><circle cx="846.9" cy="416" r="3.1" fill="#4f84b8" stroke="#111" stroke-width="1.4"/><path d="M845.1,416 H848.6999999999999 M846.9,414.2 V417.8" stroke="#7fb4e4" stroke-width="0.7"/>
<rect x="629.4" y="75.3" width="8.6" height="8.2" fill="#bdd9f1" stroke="#111" stroke-width="1.1" stroke-dasharray="1.8 1.2" stroke-linecap="butt"/><path d="M641.4,85.5 L645.0,88.69999999999999" stroke="#222" stroke-width="1.2"/><path d="M636.8,81.1 L644.0,83.8 L641.1999999999999,85.3 L639.6999999999999,88.0 Z" fill="#fff" stroke="#1a1a1a" stroke-width="1.1"/>
<rect x="600.4" y="409.3" width="8.6" height="8.2" fill="#bdd9f1" stroke="#111" stroke-width="1.1" stroke-dasharray="1.8 1.2" stroke-linecap="butt"/><path d="M612.4,419.5 L616.0,422.70000000000005" stroke="#222" stroke-width="1.2"/><path d="M607.8,415.1 L615.0,417.8 L612.1999999999999,419.3 L610.6999999999999,422.0 Z" fill="#fff" stroke="#1a1a1a" stroke-width="1.1"/>
<path d="M659.6,76.6 Q661.2,75.4 663.4,76.8 Q666.4,79 666.2,83 Q665.8,86.2 663.6,85.4 Q660.2,83.8 659.2,80 Q658.8,77.6 659.6,76.6 Z" fill="#bdd9f1" stroke="#1d3c5c" stroke-width="1.1" stroke-dasharray="1.1 2.4" stroke-linecap="butt"/><path d="M670.2,84.7 L673.8000000000001,87.89999999999999" stroke="#222" stroke-width="1.2"/><path d="M665.6,80.3 L672.8000000000001,83.0 L670.0,84.5 L668.5,87.2 Z" fill="#fff" stroke="#1a1a1a" stroke-width="1.1"/><path d="M670,80.4 L673.8,76.2" stroke="#888" stroke-width="0.9" stroke-dasharray="1.2 1.2" stroke-linecap="butt"/>
<rect x="687.2" y="75.5" width="8.4" height="12.2" fill="#fff" stroke="#111" stroke-width="1.5"/><path d="M689.2,77.39999999999999 h4.6 M689.2,79.39999999999999 h4.6 M689.2,81.39999999999999 h4.6 M689.2,83.39999999999999 h4.6 M689.2,85.39999999999999 h4.6" stroke="#111" stroke-width="1.1" stroke-linecap="butt"/><path d="M698.5,85.60000000000001 L702.1,88.8" stroke="#222" stroke-width="1.2"/><path d="M693.9,81.2 L701.1,83.9 L698.3,85.4 L696.8,88.10000000000001 Z" fill="#fff" stroke="#1a1a1a" stroke-width="1.1"/>
<rect x="629.5" y="409.5" width="8.4" height="12.2" fill="#fff" stroke="#111" stroke-width="1.5"/><path d="M631.5,411.40000000000003 h4.6 M631.5,413.40000000000003 h4.6 M631.5,415.40000000000003 h4.6 M631.5,417.40000000000003 h4.6 M631.5,419.40000000000003 h4.6" stroke="#111" stroke-width="1.1" stroke-linecap="butt"/><path d="M640.8,419.59999999999997 L644.4,422.8" stroke="#222" stroke-width="1.2"/><path d="M636.1999999999999,415.2 L643.4,417.9 L640.5999999999999,419.4 L639.0999999999999,422.09999999999997 Z" fill="#fff" stroke="#1a1a1a" stroke-width="1.1"/>
<rect x="722.6" y="84.6" width="5.2" height="5.2" fill="#b1ddb4" stroke="#111" stroke-width="1.3"/><rect x="732.6" y="74.4" width="5.2" height="5.2" fill="#b1ddb4" stroke="#111" stroke-width="1.3"/><path d="M727.6,84.8 L731.6,80.8 M728.4,80.8 H731.6 V84.0" stroke="#111" stroke-width="1.2"/>
<g transform="translate(0,0)"><path d="M752.4,75.6 H765.5 V88.5" stroke="#111" stroke-width="1.2"/><rect x="751.3" y="84.6" width="5.2" height="5.2" fill="#b1ddb4" stroke="#111" stroke-width="1.3"/><path d="M756.4,84.8 L760.4,80.8 M757.1999999999999,80.8 H760.4 V84.0" stroke="#111" stroke-width="1.2"/><circle cx="752.4" cy="75.6" r="1.25" fill="#f6dc4a" stroke="#111" stroke-width="0.9"/><circle cx="765.5" cy="75.6" r="1.25" fill="#f6dc4a" stroke="#111" stroke-width="0.9"/><circle cx="765.5" cy="88.5" r="1.25" fill="#f6dc4a" stroke="#111" stroke-width="0.9"/></g>
<g transform="translate(-86.9,334)"><path d="M752.4,75.6 H765.5 V88.5" stroke="#111" stroke-width="1.2"/><rect x="751.3" y="84.6" width="5.2" height="5.2" fill="#b1ddb4" stroke="#111" stroke-width="1.3"/><path d="M756.4,84.8 L760.4,80.8 M757.1999999999999,80.8 H760.4 V84.0" stroke="#111" stroke-width="1.2"/><circle cx="752.4" cy="75.6" r="1.25" fill="#f6dc4a" stroke="#111" stroke-width="0.9"/><circle cx="765.5" cy="75.6" r="1.25" fill="#f6dc4a" stroke="#111" stroke-width="0.9"/><circle cx="765.5" cy="88.5" r="1.25" fill="#f6dc4a" stroke="#111" stroke-width="0.9"/></g>
<path d="M782.6,81.4 L793.8,76 L791.6,83 Z" fill="#cfe0f1" stroke="none"/><rect x="782.4" y="82.2" width="8.6" height="6.6" fill="#a9d9ad" stroke="#555" stroke-width="1.2"/><path d="M783,80.9 L794,75.8 M790,85.2 L794.4,87.2" stroke="#111" stroke-width="1.1"/><circle cx="783" cy="80.9" r="1.7" fill="#f9dc3c" stroke="#111" stroke-width="1"/><circle cx="794" cy="75.8" r="1.7" fill="#f9dc3c" stroke="#111" stroke-width="1"/><circle cx="790" cy="85.2" r="1.7" fill="#f9dc3c" stroke="#111" stroke-width="1"/>
<path d="M812,75.8 H823" stroke="#777" stroke-width="1.6"/><path d="M812,81 H823 L820,84 H812 Z" fill="#cfe0f1" stroke="none"/><rect x="812" y="82.4" width="8.6" height="6.4" fill="#a9d9ad" stroke="#555" stroke-width="1.2"/><path d="M812,81 H823 M819,85.2 L823,87.4" stroke="#111" stroke-width="1.1"/><circle cx="812" cy="75.8" r="1.7" fill="#f9dc3c" stroke="#111" stroke-width="1"/><circle cx="823" cy="75.8" r="1.7" fill="#f9dc3c" stroke="#111" stroke-width="1"/><circle cx="812" cy="81" r="1.7" fill="#f9dc3c" stroke="#111" stroke-width="1"/><circle cx="823" cy="81" r="1.7" fill="#f9dc3c" stroke="#111" stroke-width="1"/><circle cx="819" cy="85.2" r="1.7" fill="#f9dc3c" stroke="#111" stroke-width="1"/>
<path d="M846.6,76.6 L857,87" stroke="#222" stroke-width="1.1" stroke-dasharray="1.7 1.4" stroke-linecap="butt"/><circle cx="845.8" cy="75.8" r="1.75" fill="#8fc5ec" stroke="#222" stroke-width="1"/><circle cx="858" cy="88" r="1.75" fill="#8fc5ec" stroke="#222" stroke-width="1"/>
<path d="M874.6,75.6 L886,87" stroke="#222" stroke-width="1.1" stroke-dasharray="1.7 1.4" stroke-linecap="butt"/><circle cx="887" cy="88" r="1.75" fill="#8fc5ec" stroke="#222" stroke-width="1"/>
<path d="M904.4,80.7 L911.2,87.6 M902.6,82.5 L906.1999999999999,78.9 M909.4000000000001,89.39999999999999 L913.0,85.8 M907.3,80.7 H904.4 V83.60000000000001 M908.3000000000001,87.6 H911.2 V84.69999999999999" stroke="#1c1c1c" stroke-width="0.9"/>
<text x="913" y="81.7" font-family="Liberation Sans, sans-serif" font-size="10.6" fill="#222" text-anchor="middle" stroke="none">3</text>
<text x="909.4" y="81.4" font-family="Liberation Sans, sans-serif" font-size="8.6" fill="#bdbdbd" text-anchor="middle" stroke="none">(</text><text x="916.9" y="81.4" font-family="Liberation Sans, sans-serif" font-size="8.6" fill="#bdbdbd" text-anchor="middle" stroke="none">)</text>
<path d="M933.2,76.7 L944.9,87.5 M931.4000000000001,78.5 L935.0,74.9 M943.1,89.3 L946.6999999999999,85.7 M936.1,76.7 H933.2 V79.60000000000001 M942.0,87.5 H944.9 V84.6" stroke="#1c1c1c" stroke-width="0.9"/><path d="M938.2,83.3 L940.2,81.2" stroke="#888" stroke-width="1"/>
<g transform="translate(0,0)"><path d="M966.4,77.6 L969.2,74.8 L981.9,86.4 L979,89.3 Z" fill="#f9d08c" stroke="#555" stroke-width="1"/><path d="M969.6,77.4 l1.2,-1.2 M971.6,79.2 l0.9,-0.9 M973.6,81 l1.2,-1.2 M975.6,82.8 l0.9,-0.9 M977.6,84.6 l1.2,-1.2" stroke="#555" stroke-width="0.7"/></g>
<g transform="translate(-267.1,333.4)"><path d="M966.4,77.6 L969.2,74.8 L981.9,86.4 L979,89.3 Z" fill="#f9d08c" stroke="#555" stroke-width="1"/><path d="M969.6,77.4 l1.2,-1.2 M971.6,79.2 l0.9,-0.9 M973.6,81 l1.2,-1.2 M975.6,82.8 l0.9,-0.9 M977.6,84.6 l1.2,-1.2" stroke="#555" stroke-width="0.7"/></g>
<rect x="995.5" y="74.5" width="9.4" height="9.4" fill="#a9d9ad" stroke="#111" stroke-width="1.1" stroke-dasharray="1.8 1.2" stroke-linecap="butt"/><path d="M1001.9,80.7 Q1001.9,79.5 1003.1,79.5 H1005.9 L1008.1,81.7 V86.5 Q1008.1,87.7 1006.9,87.7 H1003.1 Q1001.9,87.7 1001.9,86.5 Z" fill="#fbf0c0" stroke="#222" stroke-width="1.1"/><path d="M1003.8,82.7 Q1003.8,81.5 1005.0,81.5 H1007.9 L1010.5,84.1 V88.1 Q1010.5,89.3 1009.3,89.3 H1005.0 Q1003.8,89.3 1003.8,88.1 Z" fill="#fbf0c0" stroke="#222" stroke-width="1.1"/><path d="M1007.5,81.7 V84.5 H1010.3" stroke="#222" stroke-width="0.9"/>
<rect x="728.3" y="408.6" width="9.4" height="9.4" fill="#a9d9ad" stroke="#111" stroke-width="1.1" stroke-dasharray="1.8 1.2" stroke-linecap="butt"/><path d="M735,414.59999999999997 Q735,413.4 736.2,413.4 H739 L741.2,415.59999999999997 V420.4 Q741.2,421.59999999999997 740,421.59999999999997 H736.2 Q735,421.59999999999997 735,420.4 Z" fill="#fbf0c0" stroke="#222" stroke-width="1.1"/><path d="M736.9,416.59999999999997 Q736.9,415.4 738.1,415.4 H741 L743.6,418.0 V422.0 Q743.6,423.2 742.4,423.2 H738.1 Q736.9,423.2 736.9,422.0 Z" fill="#fbf0c0" stroke="#222" stroke-width="1.1"/><path d="M740.6,415.59999999999997 V418.4 H743.4" stroke="#222" stroke-width="0.9"/>
<rect x="1024.3" y="74.5" width="9.4" height="9.4" fill="#a9d9ad" stroke="#111" stroke-width="1.1" stroke-dasharray="1.8 1.2" stroke-linecap="butt"/>
<rect x="1031" y="77.2" width="8.6" height="11.6" fill="#e2e2e2" stroke="none"/><path d="M1032,77 V89 M1038.6,77 V89" stroke="#111" stroke-width="2.2" stroke-linecap="butt"/><path d="M1031,81 H1039.8 M1031,85.6 H1039.8" stroke="#111" stroke-width="1" stroke-linecap="butt"/><path d="M1032,78.4 v1 M1032,80.8 v1 M1032,83.2 v1 M1032,85.6 v1 M1032,87.6 v0.8 M1038.6,78.4 v1 M1038.6,80.8 v1 M1038.6,83.2 v1 M1038.6,85.6 v1 M1038.6,87.6 v0.8" stroke="#e2e2e2" stroke-width="0.9" stroke-linecap="butt"/>
<circle cx="1059.4" cy="80.6" r="5.3" fill="#bdd9f1" stroke="#3f6f9f" stroke-width="1" stroke-dasharray="1.2 1.5" stroke-linecap="butt"/><circle cx="1064.1" cy="84.6" r="4.6" fill="#f9d08c" stroke="#444" stroke-width="1.2"/>
<text x="1064.1" y="87.3" font-family="Liberation Sans, sans-serif" font-size="7" font-weight="bold" fill="#444" text-anchor="middle" stroke="none">$</text>
<path d="M1082.2,74.2 L1097.8,89.8 M1097.8,74.2 L1082.2,89.8" stroke="#333" stroke-width="1"/><circle cx="1090" cy="82" r="3.3" fill="#e8917b" stroke="#333" stroke-width="1"/><path d="M1087.7,79.7 L1092.3,84.3 M1092.3,79.7 L1087.7,84.3" stroke="#333" stroke-width="0.8"/>
<path d="M757.3000000000001,408.2 L772.9,423.8 M772.9,408.2 L757.3000000000001,423.8" stroke="#333" stroke-width="1"/><circle cx="765.1" cy="416" r="3.3" fill="#e8917b" stroke="#333" stroke-width="1"/><path d="M762.8000000000001,413.7 L767.4,418.3 M767.4,413.7 L762.8000000000001,418.3" stroke="#333" stroke-width="0.8"/>
<circle cx="514.9" cy="415.8" r="7.8" fill="#fdfdfd" stroke="#222" stroke-width="1"/>
<rect x="507.6" y="414.2" width="14.6" height="3.4" fill="#b4b4b4" stroke="none"/>
<path d="M507.2,415.8 L508.6,414.4 V417.2 Z M522.6,415.8 L521.2,414.4 V417.2 Z" fill="#111" stroke="none"/>
<path d="M515,410.8 L519.3,412.8 L515,414.7 L510.7,412.8 Z" fill="#fff59a" stroke="#6a4a10" stroke-width="0.7"/><path d="M510.7,412.8 L515,414.7 V421 L510.7,419 Z" fill="#f7e52e" stroke="#6a4a10" stroke-width="0.7"/><path d="M515,414.7 L519.3,412.8 V419 L515,421 Z" fill="#ecd024" stroke="#6a4a10" stroke-width="0.7"/>
<path d="M510.7,415.9 L515,417.8 L519.3,415.9 M512.8,413.8 V420 M517.2,413.8 V420 M512.8,411.8 L517.2,413.8 M517.2,411.8 L512.8,413.8" stroke="#6a4a10" stroke-width="0.6"/>
<g stroke="#2e2e2e" stroke-width="1.2"><path d="M536.5,411.6 V408.8 H539.3 M536.7,409 L539.2,411.5 M549,408.8 H551.8 V411.6 M551.6,409 L549.1,411.5 M536.5,419.8 V422.6 H539.3 M536.7,422.4 L539.2,419.9 M551.8,419.8 V422.6 H549 M551.6,422.4 L549.1,419.9"/></g>
<rect x="539.6" y="412" width="2.9" height="7.600000000000023" fill="#f8ee58" stroke="#3e3010" stroke-width="0.8"/><rect x="539.6" y="412" width="2.9" height="1.6" fill="#c4c0a8" stroke="#3e3010" stroke-width="0.6"/><path d="M541.0500000000001,415 V418.40000000000003" stroke="#fffbd0" stroke-width="0.9"/><rect x="545.8" y="412" width="2.9" height="7.600000000000023" fill="#f8ee58" stroke="#3e3010" stroke-width="0.8"/><rect x="545.8" y="412" width="2.9" height="1.6" fill="#c4c0a8" stroke="#3e3010" stroke-width="0.6"/><path d="M547.25,415 V418.40000000000003" stroke="#fffbd0" stroke-width="0.9"/><rect x="542.4" y="410.6" width="3.5" height="9.899999999999977" fill="#f8ee58" stroke="#3e3010" stroke-width="0.8"/><rect x="542.4" y="410.6" width="3.5" height="1.6" fill="#c4c0a8" stroke="#3e3010" stroke-width="0.6"/><path d="M544.15,413.6 V419.3" stroke="#fffbd0" stroke-width="0.9"/>
<path d="M575.8,413 L579.4,409.9 V422 L575.8,418.9 Z" fill="#fff" stroke="none"/><path d="M579.2,409.9 V422" stroke="#9a9a9a" stroke-width="1.2" stroke-linecap="butt"/><path d="M575.8,413 L578.6,410.6 M575.8,418.9 L578.9,421.6" stroke="#222" stroke-width="1.1"/>
<rect x="565.7" y="412.6" width="2.9" height="7.7999999999999545" fill="#f8ee58" stroke="#3e3010" stroke-width="0.8"/><rect x="565.7" y="412.6" width="2.9" height="1.6" fill="#c4c0a8" stroke="#3e3010" stroke-width="0.6"/><path d="M567.1500000000001,415.6 V419.2" stroke="#fffbd0" stroke-width="0.9"/><rect x="571.6" y="412.6" width="2.9" height="7.7999999999999545" fill="#f8ee58" stroke="#3e3010" stroke-width="0.8"/><rect x="571.6" y="412.6" width="2.9" height="1.6" fill="#c4c0a8" stroke="#3e3010" stroke-width="0.6"/><path d="M573.0500000000001,415.6 V419.2" stroke="#fffbd0" stroke-width="0.9"/><rect x="568.4" y="411.2" width="3.4" height="10.100000000000023" fill="#f8ee58" stroke="#3e3010" stroke-width="0.8"/><rect x="568.4" y="411.2" width="3.4" height="1.6" fill="#c4c0a8" stroke="#3e3010" stroke-width="0.6"/><path d="M570.1,414.2 V420.1" stroke="#fffbd0" stroke-width="0.9"/>
<path d="M798.4,414.3 H800 L800.8,413.1 H804.4 L805.2,414.3 H806.2 Q807.2,414.3 807.2,415.3 V419.7 Q807.2,420.7 806.2,420.7 H798.4 Q797.4,420.7 797.4,419.7 V415.3 Q797.4,414.3 798.4,414.3 Z" fill="#cfcfcf" stroke="#111" stroke-width="1.3"/><circle cx="802.4" cy="417.4" r="2" fill="#e6e6e6" stroke="#111" stroke-width="1.1"/>
<path d="M799.5,408.9 L798.3,411.6 L800.6,413.2 L797.8,413.6 L797.6,415 L796.6,414.6 L794.3,418.7 L795.2,414.4 L792.2,413.2 L795.2,412.2 L795.4,409.7 L797,411.5 Z" fill="#1a1a1a" stroke="none"/><path d="M797.2,412.2 L798.6,412.9" stroke="#f0c060" stroke-width="0.7"/>
<path d="M814,414.2 L817.9,418 L821.8,414.2" stroke="#333" stroke-width="1.2"/>
<circle cx="777" cy="705" r="1.75" fill="#111"/>
<circle cx="777" cy="711" r="1.75" fill="#111"/>
<circle cx="777" cy="717" r="1.75" fill="#111"/>
<g stroke="#111" stroke-width="1.1" stroke-linecap="butt"><rect x="1207.6" y="703.6" width="7.4" height="4.2"/><path d="M1203,710.8 H1219"/><rect x="1207.6" y="714" width="7.4" height="4.2"/></g>
</svg>
<div class="tx ns" style="left:33.70px;top:8.94px;font-size:12px;color:#d3dbe3;font-weight:normal;transform:scaleX(0.9552)">CET 15.5 (Beta-64-bit) - New Drawing 1</div>
<div class="tx ns" style="left:797.70px;top:8.94px;font-size:12px;color:#d3dbe3;font-weight:normal;transform:scaleX(0.9517)">Share feedback</div>
<div class="tx ns" style="left:944.70px;top:8.94px;font-size:12px;color:#d3dbe3;font-weight:normal;transform:scaleX(0.9277)">New UI</div>
<div class="tx" style="left:37.20px;top:39.94px;font-size:12px;color:#0a0a0a;font-weight:normal;transform:scaleX(0.9426)">Edit</div>
<div class="tx" style="left:69.20px;top:39.94px;font-size:12px;color:#0a0a0a;font-weight:normal;transform:scaleX(0.9874)">Object</div>
<div class="tx" style="left:116.20px;top:39.94px;font-size:12px;color:#0a0a0a;font-weight:normal;transform:scaleX(0.9727)">Tools</div>
<div class="tx" style="left:155.95px;top:39.94px;font-size:12px;color:#0a0a0a;font-weight:normal;transform:scaleX(0.9278)">Views</div>
<div class="tx" style="left:197.95px;top:39.94px;font-size:12px;color:#0a0a0a;font-weight:normal;transform:scaleX(0.9697)">Drawings</div>
<div class="tx" style="left:259.20px;top:39.94px;font-size:12px;color:#0a0a0a;font-weight:normal;transform:scaleX(0.9823)">Help</div>
<div class="tx" style="left:1245.10px;top:40.14px;font-size:12px;color:#0a0a0a;font-weight:normal;transform:scaleX(0.8857)">$0.00</div>
<div class="tx" style="left:8.70px;top:68.94px;font-size:12px;color:#0a0a0a;font-weight:normal;transform:scaleX(0.9667)">Show all tabs</div>
<div class="tx" style="left:209.70px;top:68.74px;font-size:12px;color:#0a0a0a;font-weight:normal;transform:scaleX(0.9981)">A</div>
<div class="tx" style="left:238.20px;top:68.74px;font-size:12px;color:#0a0a0a;font-weight:normal;transform:scaleX(0.8109)">B</div>
<div class="tx" style="left:265.95px;top:68.74px;font-size:12px;color:#0a0a0a;font-weight:normal;transform:scaleX(0.8937)">C</div>
<div class="tx" style="left:48.20px;top:111.37px;font-size:13.4px;color:#0a0a0a;font-weight:normal;transform:scaleX(1.0100)">Rendering Tools</div>
<div class="tx ns" style="left:36.45px;top:149.24px;font-size:13px;color:#0a0a0a;font-weight:bold;transform:scaleX(0.9819)">Material</div>
<div class="tx ns" style="left:36.45px;top:261.24px;font-size:13px;color:#0a0a0a;font-weight:bold;transform:scaleX(0.9314)">Lighting</div>
<div class="tx ns" style="left:36.30px;top:397.24px;font-size:13px;color:#0a0a0a;font-weight:bold;transform:scaleX(0.9192)">Clipping</div>
<div class="tx ns" style="left:15.70px;top:287.68px;font-size:11.4px;color:#484848;font-weight:normal;transform:scaleX(1.0040)">Realtime lights</div>
<div class="tx" style="left:20.70px;top:705.14px;font-size:12px;color:#0a0a0a;font-weight:normal;transform:scaleX(0.9605)">Preview</div>
<div class="tx" style="left:379.10px;top:703.84px;font-size:12px;color:#0a0a0a;font-weight:normal;transform:scaleX(1.0188)">Normal</div>
<div class="tx" style="left:445.10px;top:703.84px;font-size:12px;color:#0a0a0a;font-weight:normal;transform:scaleX(1.0074)">Architectural</div>
<div class="tx" style="left:539.30px;top:703.84px;font-size:12px;color:#0a0a0a;font-weight:normal;transform:scaleX(0.9154)">CAD</div>
<div class="tx" style="left:589.20px;top:703.84px;font-size:12px;color:#0a0a0a;font-weight:normal;transform:scaleX(0.8653)">TAGS</div>
<div class="tx" style="left:643.30px;top:703.84px;font-size:12px;color:#0a0a0a;font-weight:normal;transform:scaleX(0.9702)">Colored Tags</div>
<div class="tx" style="left:737.70px;top:703.84px;font-size:12px;color:#0a0a0a;font-weight:normal;transform:scaleX(1.0117)">All</div>
<div class="tx" style="left:1127.70px;top:703.84px;font-size:12px;color:#0a0a0a;font-weight:normal;transform:scaleX(0.8864)">2D</div>
<div class="tx" style="left:1165.70px;top:703.84px;font-size:12px;color:#0a0a0a;font-weight:normal;transform:scaleX(0.8798)">3D</div>
<div class="tx" style="left:1240.20px;top:703.84px;font-size:12px;color:#0a0a0a;font-weight:normal;transform:scaleX(0.9210)">Paper</div>
<div class="tx" style="left:26.90px;top:207.38px;font-size:11.4px;color:#0a0a0a;font-weight:normal;transform:scaleX(1.0268)">Material</div>
<div class="tx" style="left:27.40px;top:220.08px;font-size:11.4px;color:#0a0a0a;font-weight:normal;transform:scaleX(0.9986)">explorer</div>
<div class="tx" style="left:99.30px;top:207.38px;font-size:11.4px;color:#0a0a0a;font-weight:normal;transform:scaleX(1.0095)">Material</div>
<div class="tx" style="left:103.40px;top:220.08px;font-size:11.4px;color:#0a0a0a;font-weight:normal;transform:scaleX(1.0491)">dialog</div>
<div class="tx" style="left:177.00px;top:213.48px;font-size:11.4px;color:#0a0a0a;font-weight:normal;transform:scaleX(0.9382)">Picker</div>
<div class="tx" style="left:245.20px;top:207.38px;font-size:11.4px;color:#0a0a0a;font-weight:normal;transform:scaleX(1.0302)">Double</div>
<div class="tx" style="left:250.20px;top:220.08px;font-size:11.4px;color:#0a0a0a;font-weight:normal;transform:scaleX(0.9987)">sided</div>
<div class="tx" style="left:30.00px;top:343.38px;font-size:11.4px;color:#0a0a0a;font-weight:normal;transform:scaleX(1.0078)">Ceiling</div>
<div class="tx" style="left:37.50px;top:356.08px;font-size:11.4px;color:#0a0a0a;font-weight:normal;transform:scaleX(1.0474)">grid</div>
<div class="tx" style="left:97.00px;top:343.38px;font-size:11.4px;color:#0a0a0a;font-weight:normal;transform:scaleX(1.0439)">Hanging</div>
<div class="tx" style="left:94.90px;top:356.08px;font-size:11.4px;color:#0a0a0a;font-weight:normal;transform:scaleX(0.9961)">fluoresc...</div>
<div class="tx" style="left:168.20px;top:349.48px;font-size:11.4px;color:#0a0a0a;font-weight:normal;transform:scaleX(1.0670)">Spotlight</div>
<div class="tx" style="left:242.10px;top:342.38px;font-size:11.4px;color:#0a0a0a;font-weight:normal;transform:scaleX(1.0761)">Window</div>
<div class="tx" style="left:252.20px;top:354.98px;font-size:11.4px;color:#0a0a0a;font-weight:normal;transform:scaleX(1.1049)">light</div>
</body></html>
